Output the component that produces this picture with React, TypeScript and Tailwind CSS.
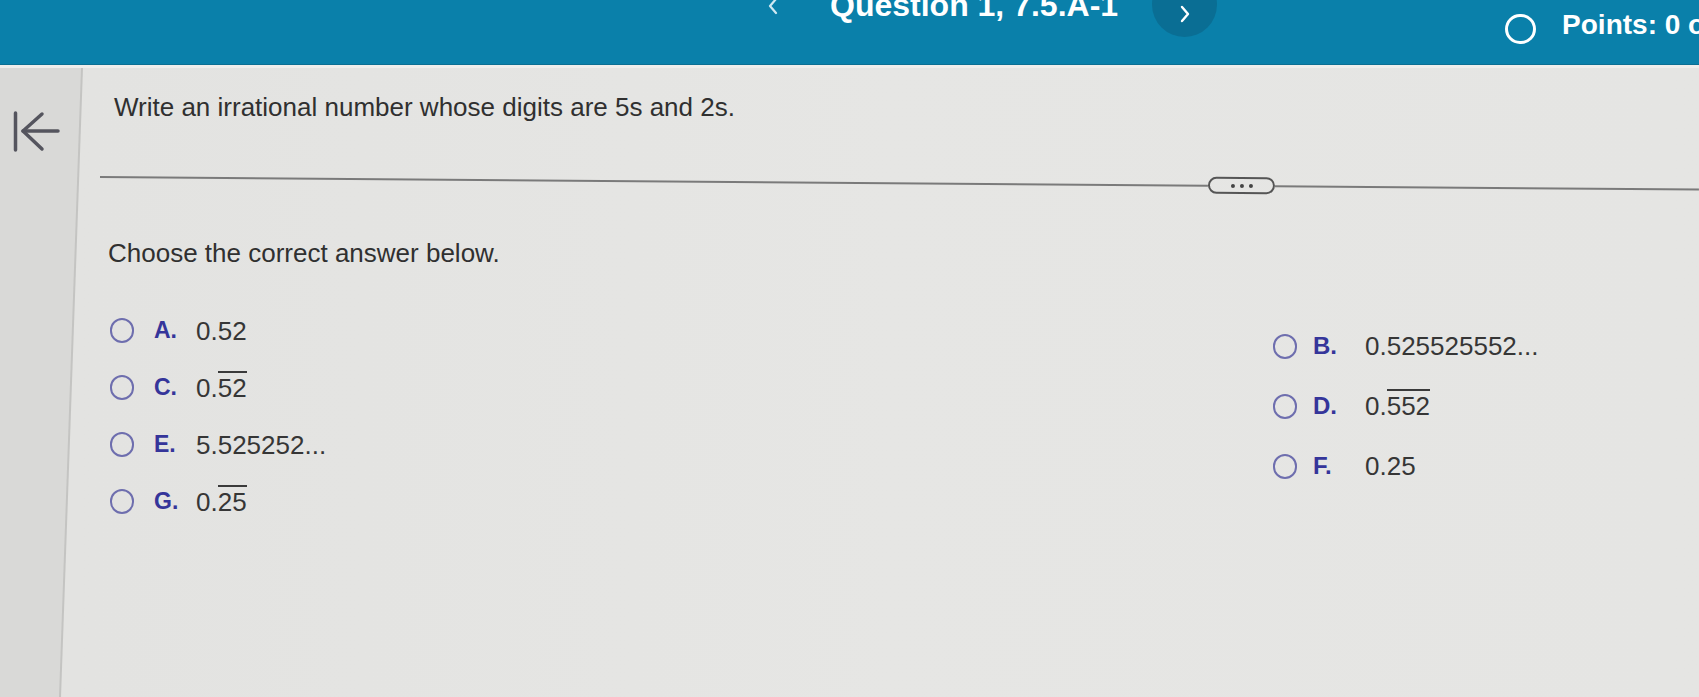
import React from 'react';

interface Choice {
  letter: string;
  whole: string;
  bar?: string;
}

const leftChoices: Choice[] = [
  { letter: 'A.', whole: '0.52' },
  { letter: 'C.', whole: '0.', bar: '52' },
  { letter: 'E.', whole: '5.525252...' },
  { letter: 'G.', whole: '0.', bar: '25' },
];

const rightChoices: Choice[] = [
  { letter: 'B.', whole: '0.525525552...' },
  { letter: 'D.', whole: '0.', bar: '552' },
  { letter: 'F.', whole: '0.25' },
];

function ChoiceRow({ choice, rowClass, letterClass }: { choice: Choice; rowClass: string; letterClass: string }) {
  return (
    <div className={rowClass}>
      <span className="w-[24px] h-[25px] rounded-full border-2 border-[#6e6eae] shrink-0" />
      <span className={letterClass}>{choice.letter}</span>
      <span className="text-[26px] text-[#363636] leading-none whitespace-nowrap">
        {choice.whole}
        {choice.bar && <span className="border-t-2 border-[#3a3a3a]">{choice.bar}</span>}
      </span>
    </div>
  );
}

export default function App() {
  return (
    <div className="w-[1699px] h-[697px] overflow-hidden flex flex-col font-['Liberation_Sans',Arial,sans-serif] bg-[#e3e3e1]">
      {/* top bar */}
      <header className="h-[65px] shrink-0 bg-[#0a80aa] border-b border-[#0b6f93] flex items-start overflow-hidden">
        <svg width="12" height="18" viewBox="0 0 12 18" className="ml-[767px] mt-[-3px] shrink-0">
          <path d="M9 2 L3 9 L9 16" fill="none" stroke="#cfe8f2" strokeWidth="2.2" strokeLinecap="round" strokeLinejoin="round" />
        </svg>
        <div className="ml-[51px] mt-[-11px] text-[32px] font-bold text-white leading-none whitespace-nowrap">
          Question 1, 7.5.A-1
        </div>
        <div className="ml-[34px] mt-[-28px] w-[65px] h-[65px] rounded-full bg-[#0a6e94] shrink-0 flex items-center justify-center">
          <svg width="12" height="18" viewBox="0 0 12 18" className="mt-[18px]">
            <path d="M3 2 L9 9 L3 16" fill="none" stroke="#ffffff" strokeWidth="2.4" strokeLinecap="round" strokeLinejoin="round" />
          </svg>
        </div>
        <span className="ml-[288px] mt-[14px] w-[31px] h-[30px] rounded-full border-[3px] border-white shrink-0" />
        <div className="ml-[26px] mt-[11px] text-[28px] font-bold text-white leading-none whitespace-nowrap">
          Points: 0 of 1
        </div>
      </header>
      <div className="h-[3px] shrink-0 bg-[#eeeeec]" />

      <div className="flex flex-1 min-h-0">
        {/* left rail */}
        <aside className="w-[83px] shrink-0 bg-[#c4c4c2] [clip-path:polygon(0_0,83px_0,61px_100%,0_100%)]">
          <div className="h-full pt-[42px] bg-[#d9d9d7] [clip-path:polygon(0_0,81px_0,59px_100%,0_100%)]">
            <svg width="60" height="44" viewBox="0 0 60 44" className="ml-[10px]">
              <g fill="none" stroke="#55555e" strokeWidth="3.5" strokeLinecap="round" strokeLinejoin="round">
                <path d="M5.5 3 L5.5 40" />
                <path d="M13 21 L48 21" />
                <path d="M32 4 L13 21 L32 39" />
              </g>
            </svg>
          </div>
        </aside>

        {/* question */}
        <main className="flex-1 -ml-[1px] pl-[26px] bg-gradient-to-r from-[#e3e3e1] via-[#e6e6e4] to-[#e5e5e3]">
          <p className="ml-[6px] mt-[26px] text-[26px] leading-none text-[#303030]">
            Write an irrational number whose digits are 5s and 2s.
          </p>

          <div className="-ml-[8px] mt-[48px] flex items-center rotate-[0.45deg] origin-left">
            <div className="w-[1108px] h-[2px] bg-[#7a7a7a]" />
            <div className="w-[67px] h-[17px] rounded-full border-2 border-[#555555] flex items-center justify-center gap-[5px] shrink-0">
              <span className="w-[4px] h-[4px] rounded-full bg-[#444444]" />
              <span className="w-[4px] h-[4px] rounded-full bg-[#444444]" />
              <span className="w-[4px] h-[4px] rounded-full bg-[#444444]" />
            </div>
            <div className="flex-1 h-[2px] bg-[#7a7a7a]" />
          </div>

          <p className="mt-[55px] text-[26px] leading-none text-[#303030]">Choose the correct answer below.</p>

          <div className="ml-[2px] mt-[36px] flex items-start">
            <div className="w-[1163px] flex flex-col">
              {leftChoices.map((c) => (
                <ChoiceRow
                  key={c.letter}
                  choice={c}
                  rowClass="h-[57px] flex items-center"
                  letterClass="ml-[20px] w-[42px] text-[23px] font-bold text-[#35359a] leading-none"
                />
              ))}
            </div>
            <div className="mt-[14px] flex flex-col">
              {rightChoices.map((c) => (
                <ChoiceRow
                  key={c.letter}
                  choice={c}
                  rowClass="h-[60px] flex items-center"
                  letterClass="ml-[16px] w-[52px] text-[24px] font-bold text-[#35359a] leading-none"
                />
              ))}
            </div>
          </div>
        </main>
      </div>
    </div>
  );
}
